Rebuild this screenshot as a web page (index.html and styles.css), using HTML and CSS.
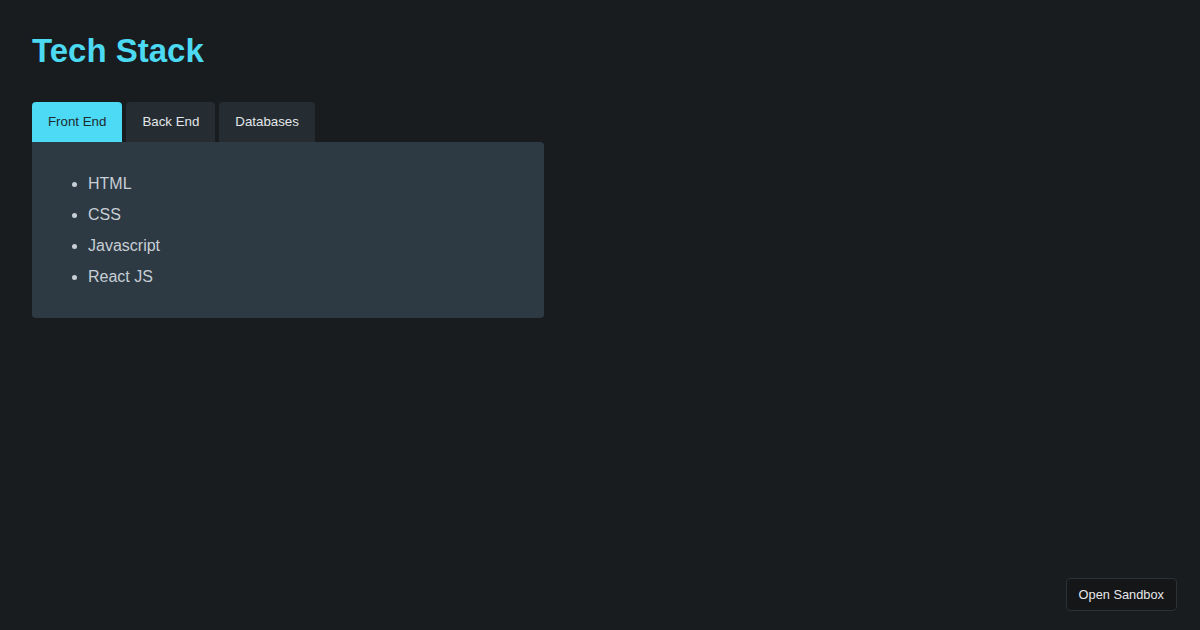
FILE: index.html
```html
<!DOCTYPE html>
<html lang="en">
<head>
    <meta charset="UTF-8">
    <meta name="viewport" content="width=device-width, initial-scale=1.0">
    <title>Tech Stack</title>
    <link rel="stylesheet" href="styles.css">
</head>
<body>
    <div class="app">
        <h1 class="title">Tech Stack</h1>

        <div class="tabs">
            <button class="tab active">Front End</button>
            <button class="tab">Back End</button>
            <button class="tab">Databases</button>
        </div>

        <div class="panel">
            <ul class="stack-list">
                <li>HTML</li>
                <li>CSS</li>
                <li>Javascript</li>
                <li>React JS</li>
            </ul>
        </div>
    </div>

    <a class="sandbox-btn" href="#">Open Sandbox</a>
</body>
</html>
```

FILE: styles.css
```css
html, body {
    height: 100%;
}
body {
    margin: 0;
    background: #191c1f;
    font-family: "Liberation Sans", Arial, sans-serif;
    color: #c7ced5;
}
.app {
    padding: 32px;
}
.title {
    margin: 0 0 32px;
    font-size: 33px;
    line-height: 38px;
    font-weight: bold;
    color: #4cd9f2;
}
.tabs {
    display: flex;
    gap: 4px;
}
.tab {
    height: 40px;
    padding: 0 16px 2px;
    border: none;
    border-radius: 4px 4px 0 0;
    background: #262d32;
    color: #e3e7ea;
    font-family: "Liberation Sans", Arial, sans-serif;
    font-size: 13.3px;
    cursor: pointer;
}
.tab.active {
    background: #4cdaf5;
    color: #1f2a30;
}
.panel {
    width: 512px;
    box-sizing: border-box;
    padding: 10px 16px;
    background: #2d3a44;
    border-radius: 0 4px 4px 4px;
}
.stack-list {
    margin: 16px 0;
    padding-left: 40px;
    font-size: 16px;
}
.stack-list li {
    line-height: 31px;
}
.sandbox-btn {
    position: fixed;
    right: 23px;
    bottom: 19px;
    padding: 0 12px;
    height: 31px;
    line-height: 31px;
    background: #151617;
    border: 1px solid #2c3135;
    border-radius: 4px;
    color: #e6e8ea;
    font-size: 12.8px;
    text-decoration: none;
}
```
